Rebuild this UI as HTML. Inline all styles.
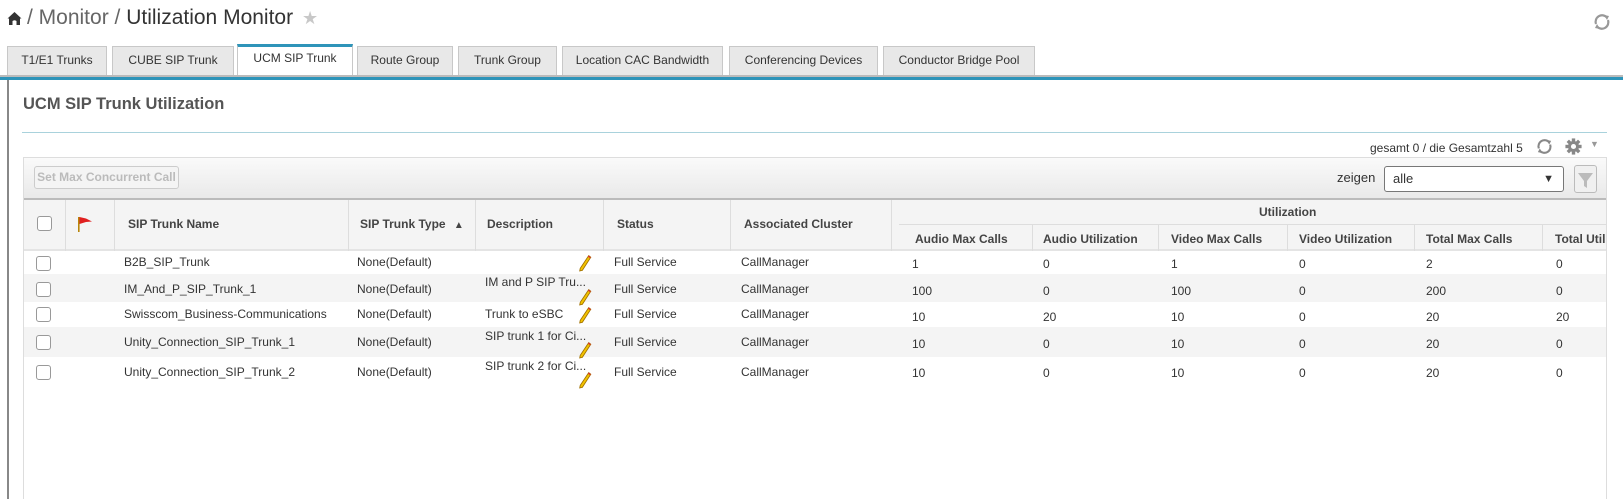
<!DOCTYPE html>
<html><head><meta charset="utf-8"><style>
*{box-sizing:border-box;margin:0;padding:0}
body{width:1623px;height:499px;background:#fff;font-family:"Liberation Sans",Arial,sans-serif;font-size:12px;color:#333;position:relative;overflow:hidden}
.a{position:absolute;white-space:nowrap}
.tab{position:absolute;top:46px;height:29px;background:#e8e8e8;border:1px solid #c8c8c8;border-bottom:none;font-size:12px;color:#333;text-align:center;line-height:26px}
.tab.act{background:#fff;border-top:3px solid #2e94b9;line-height:23px;height:31px}
.cb{position:absolute;width:15px;height:15px;border:1px solid #999;border-radius:3px;background:#fff}
.h{position:absolute;font-weight:bold;color:#444;white-space:nowrap}
.vl{position:absolute;width:1px;background:#ddd}
.row{position:absolute;left:24px;width:1582px}
.pen{position:absolute}
</style></head><body>
<svg class="a" style="left:7px;top:11px" width="15" height="15" viewBox="0 0 15 15"><path d="M7.5 1 L14.5 7.5 L13 7.5 L13 14 L9.5 14 L9.5 10 Q7.5 8.5 5.5 10 L5.5 14 L2 14 L2 7.5 L0.5 7.5 Z" fill="#333"/></svg>
<div class="a" style="left:27px;top:6px;font-size:21px;color:#666">/ Monitor / <span style="color:#333">Utilization Monitor</span></div>
<div class="a" style="left:302px;top:8px;font-size:18px;color:#c8c8c8">★</div>
<svg class="a" style="left:1593px;top:13px" width="18" height="18" viewBox="0 0 18 18"><path d="M3 11 A6.5 6.5 0 0 1 14 4.5 M15 7 A6.5 6.5 0 0 1 4 13.5" stroke="#999" stroke-width="2.2" fill="none"/><path d="M11 2 L16 3 L14 7 Z M7 16 L2 15 L4 11 Z" fill="#999"/></svg>
<div class="tab" style="left:7px;width:100px">T1/E1 Trunks</div>
<div class="tab" style="left:112px;width:122px">CUBE SIP Trunk</div>
<div class="tab act" style="left:237px;width:116px;top:44px">UCM SIP Trunk</div>
<div class="tab" style="left:357px;width:96px">Route Group</div>
<div class="tab" style="left:458px;width:99px">Trunk Group</div>
<div class="tab" style="left:562px;width:161px">Location CAC Bandwidth</div>
<div class="tab" style="left:729px;width:149px">Conferencing Devices</div>
<div class="tab" style="left:883px;width:152px">Conductor Bridge Pool</div>
<div class="a" style="left:0;top:75px;width:1623px;height:2px;background:#bbb"></div>
<div class="a" style="left:0;top:77px;width:1623px;height:3px;background:#2e94b9"></div>
<div class="a" style="left:7px;top:80px;width:2px;height:419px;background:#888"></div>
<div class="a" style="left:23px;top:95px;font-size:16.5px;font-weight:bold;color:#555">UCM SIP Trunk Utilization</div>
<div class="a" style="left:22px;top:132px;width:1585px;height:1px;background:#a9d2dc"></div>
<div class="a" style="left:1370px;top:141px;font-size:12px;color:#333;width:147px;text-align:right">gesamt 0 / die Gesamtzahl 5</div>
<svg class="a" style="left:1536px;top:138px" width="17" height="17" viewBox="0 0 18 18"><path d="M3 11 A6.5 6.5 0 0 1 14 4.5 M15 7 A6.5 6.5 0 0 1 4 13.5" stroke="#888" stroke-width="2.2" fill="none"/><path d="M11 2 L16 3 L14 7 Z M7 16 L2 15 L4 11 Z" fill="#888"/></svg>
<svg class="a" style="left:1565px;top:138px" width="17" height="17" viewBox="0 0 20 20"><g fill="#888"><circle cx="10" cy="10" r="6.5"/><rect x="8" y="0.5" width="4" height="19"/><rect x="0.5" y="8" width="19" height="4"/><rect x="8" y="0.5" width="4" height="19" transform="rotate(45 10 10)"/><rect x="8" y="0.5" width="4" height="19" transform="rotate(-45 10 10)"/></g><circle cx="10" cy="10" r="3" fill="#fff"/></svg>
<div class="a" style="left:1590px;top:139px;font-size:9px;color:#999">▼</div>
<div class="a" style="left:23px;top:157px;width:1584px;height:342px;border:1px solid #ddd;border-bottom:none"></div>
<div class="a" style="left:24px;top:158px;width:1582px;height:42px;background:linear-gradient(#fafafa,#e9e9e9);border-bottom:2px solid #bbb"></div>
<div class="a" style="left:34px;top:166px;width:145px;height:23px;border:1px solid #ccc;border-radius:3px;background:#f4f4f4;color:#bbb;font-weight:bold;font-size:12px;line-height:21px;text-align:center">Set Max Concurrent Call</div>
<div class="a" style="left:1337px;top:170px;font-size:13px;color:#333">zeigen</div>
<div class="a" style="left:1384px;top:166px;width:180px;height:26px;border:1px solid #777;border-radius:3px;background:#fff;font-size:13px;line-height:24px;padding-left:8px">alle<span style="position:absolute;right:9px;top:0;font-size:11px">▼</span></div>
<div class="a" style="left:1574px;top:165px;width:23px;height:28px;border:1px solid #bbb;border-radius:3px;background:#f0f0f0"><svg width="21" height="26" viewBox="0 0 21 26"><path d="M3 7 L18 7 L12 15 L12 22 L9 20 L9 15 Z" fill="#bbb"/></svg></div>
<div class="a" style="left:24px;top:200px;width:1582px;height:51px;background:#f4f4f4;border-bottom:2px solid #e4e4e4"></div>
<div class="vl" style="left:65px;top:200px;height:51px"></div>
<div class="vl" style="left:114px;top:200px;height:51px"></div>
<div class="vl" style="left:348px;top:200px;height:51px"></div>
<div class="vl" style="left:475px;top:200px;height:51px"></div>
<div class="vl" style="left:603px;top:200px;height:51px"></div>
<div class="vl" style="left:730px;top:200px;height:51px"></div>
<div class="vl" style="left:891px;top:200px;height:51px"></div>
<div class="a" style="left:899px;top:224px;width:707px;height:1px;background:#ddd"></div>
<div class="vl" style="left:1032px;top:225px;height:26px"></div>
<div class="vl" style="left:1158px;top:225px;height:26px"></div>
<div class="vl" style="left:1287px;top:225px;height:26px"></div>
<div class="vl" style="left:1414px;top:225px;height:26px"></div>
<div class="vl" style="left:1542px;top:225px;height:26px"></div>
<div class="cb" style="left:37px;top:216px"></div>
<svg class="a" style="left:77px;top:216px" width="16" height="17" viewBox="0 0 16 17"><rect x="1" y="1" width="1.6" height="15" fill="#b8860b"/><path d="M2.5 1 L9 2.5 L15 5.5 L9 6 L2.5 8 Z" fill="#e02020"/></svg>
<div class="h" style="left:128px;top:217px">SIP Trunk Name</div>
<div class="h" style="left:360px;top:217px">SIP Trunk Type <span style="font-size:10px;margin-left:5px">▲</span></div>
<div class="h" style="left:487px;top:217px">Description</div>
<div class="h" style="left:617px;top:217px">Status</div>
<div class="h" style="left:744px;top:217px">Associated Cluster</div>
<div class="h" style="left:1259px;top:205px">Utilization</div>
<div class="h" style="left:915px;top:232px">Audio Max Calls</div>
<div class="h" style="left:1043px;top:232px">Audio Utilization</div>
<div class="h" style="left:1171px;top:232px">Video Max Calls</div>
<div class="h" style="left:1299px;top:232px">Video Utilization</div>
<div class="h" style="left:1426px;top:232px">Total Max Calls</div>
<div class="h" style="left:1555px;top:232px">Total Util</div>
<div class="row" style="top:274px;height:28px;background:#f4f4f4"></div>
<div class="row" style="top:327px;height:30px;background:#f4f4f4"></div>
<div class="cb" style="left:36px;top:256px"></div>
<div class="cb" style="left:36px;top:282px"></div>
<div class="cb" style="left:36px;top:307px"></div>
<div class="cb" style="left:36px;top:335px"></div>
<div class="cb" style="left:36px;top:365px"></div>
<div class="a" style="left:124px;top:255px">B2B_SIP_Trunk</div>
<div class="a" style="left:124px;top:282px">IM_And_P_SIP_Trunk_1</div>
<div class="a" style="left:124px;top:307px">Swisscom_Business-Communications</div>
<div class="a" style="left:124px;top:335px">Unity_Connection_SIP_Trunk_1</div>
<div class="a" style="left:124px;top:365px">Unity_Connection_SIP_Trunk_2</div>
<div class="a" style="left:357px;top:255px">None(Default)</div>
<div class="a" style="left:357px;top:282px">None(Default)</div>
<div class="a" style="left:357px;top:307px">None(Default)</div>
<div class="a" style="left:357px;top:335px">None(Default)</div>
<div class="a" style="left:357px;top:365px">None(Default)</div>
<div class="a" style="left:485px;top:275px">IM and P SIP Tru...</div>
<div class="a" style="left:485px;top:307px">Trunk to eSBC</div>
<div class="a" style="left:485px;top:329px">SIP trunk 1 for Ci...</div>
<div class="a" style="left:485px;top:359px">SIP trunk 2 for Ci...</div>
<svg class="pen" style="left:578px;top:254px" width="14" height="18" viewBox="0 0 13 17"><path d="M10 1.5 L12 3 L4 15.5 L1.5 16 L2 13.5 Z" fill="#f2c200" stroke="#a07000" stroke-width=".8"/><path d="M10 1.5 L12 3 L11.3 4 L9.3 2.6 Z" fill="#e03030"/></svg>
<svg class="pen" style="left:578px;top:288px" width="14" height="18" viewBox="0 0 13 17"><path d="M10 1.5 L12 3 L4 15.5 L1.5 16 L2 13.5 Z" fill="#f2c200" stroke="#a07000" stroke-width=".8"/><path d="M10 1.5 L12 3 L11.3 4 L9.3 2.6 Z" fill="#e03030"/></svg>
<svg class="pen" style="left:578px;top:306px" width="14" height="18" viewBox="0 0 13 17"><path d="M10 1.5 L12 3 L4 15.5 L1.5 16 L2 13.5 Z" fill="#f2c200" stroke="#a07000" stroke-width=".8"/><path d="M10 1.5 L12 3 L11.3 4 L9.3 2.6 Z" fill="#e03030"/></svg>
<svg class="pen" style="left:578px;top:341px" width="14" height="18" viewBox="0 0 13 17"><path d="M10 1.5 L12 3 L4 15.5 L1.5 16 L2 13.5 Z" fill="#f2c200" stroke="#a07000" stroke-width=".8"/><path d="M10 1.5 L12 3 L11.3 4 L9.3 2.6 Z" fill="#e03030"/></svg>
<svg class="pen" style="left:578px;top:371px" width="14" height="18" viewBox="0 0 13 17"><path d="M10 1.5 L12 3 L4 15.5 L1.5 16 L2 13.5 Z" fill="#f2c200" stroke="#a07000" stroke-width=".8"/><path d="M10 1.5 L12 3 L11.3 4 L9.3 2.6 Z" fill="#e03030"/></svg>
<div class="a" style="left:614px;top:255px">Full Service</div>
<div class="a" style="left:614px;top:282px">Full Service</div>
<div class="a" style="left:614px;top:307px">Full Service</div>
<div class="a" style="left:614px;top:335px">Full Service</div>
<div class="a" style="left:614px;top:365px">Full Service</div>
<div class="a" style="left:741px;top:255px">CallManager</div>
<div class="a" style="left:741px;top:282px">CallManager</div>
<div class="a" style="left:741px;top:307px">CallManager</div>
<div class="a" style="left:741px;top:335px">CallManager</div>
<div class="a" style="left:741px;top:365px">CallManager</div>
<div class="a" style="left:912px;top:257px">1</div><div class="a" style="left:1043px;top:257px">0</div><div class="a" style="left:1171px;top:257px">1</div><div class="a" style="left:1299px;top:257px">0</div><div class="a" style="left:1426px;top:257px">2</div><div class="a" style="left:1556px;top:257px">0</div>
<div class="a" style="left:912px;top:284px">100</div><div class="a" style="left:1043px;top:284px">0</div><div class="a" style="left:1171px;top:284px">100</div><div class="a" style="left:1299px;top:284px">0</div><div class="a" style="left:1426px;top:284px">200</div><div class="a" style="left:1556px;top:284px">0</div>
<div class="a" style="left:912px;top:310px">10</div><div class="a" style="left:1043px;top:310px">20</div><div class="a" style="left:1171px;top:310px">10</div><div class="a" style="left:1299px;top:310px">0</div><div class="a" style="left:1426px;top:310px">20</div><div class="a" style="left:1556px;top:310px">20</div>
<div class="a" style="left:912px;top:337px">10</div><div class="a" style="left:1043px;top:337px">0</div><div class="a" style="left:1171px;top:337px">10</div><div class="a" style="left:1299px;top:337px">0</div><div class="a" style="left:1426px;top:337px">20</div><div class="a" style="left:1556px;top:337px">0</div>
<div class="a" style="left:912px;top:366px">10</div><div class="a" style="left:1043px;top:366px">0</div><div class="a" style="left:1171px;top:366px">10</div><div class="a" style="left:1299px;top:366px">0</div><div class="a" style="left:1426px;top:366px">20</div><div class="a" style="left:1556px;top:366px">0</div>
</body></html>
